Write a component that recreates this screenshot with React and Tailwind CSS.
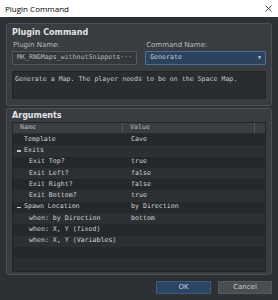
const ROWS = [
  { name: 'Template', value: 'Cave', indent: 1 },
  { name: 'Exits', value: '', indent: 0, toggle: true },
  { name: 'Exit Top?', value: 'true', indent: 2 },
  { name: 'Exit Left?', value: 'false', indent: 2 },
  { name: 'Exit Right?', value: 'false', indent: 2 },
  { name: 'Exit Bottom?', value: 'true', indent: 2 },
  { name: 'Spawn Location', value: 'by Direction', indent: 0, toggle: true },
  { name: 'when: by Direction', value: 'bottom', indent: 2 },
  { name: 'when: X, Y (fixed)', value: '', indent: 2 },
  { name: 'when: X, Y (Variables)', value: '', indent: 2 },
  { name: '', value: '', indent: 0 },
];

const mono = { fontFamily: '"DejaVu Sans Mono", monospace' };

export default function App() {
  return (
    <div className="w-[278px] h-[300px] bg-[#2d3135] flex flex-col text-[#cfd2d4] font-['DejaVu_Sans',sans-serif] overflow-hidden">
      <div className="h-[17px] bg-white flex items-center justify-between pl-[5px] pr-[6px] text-[8px] text-black font-['Open_Sans',sans-serif] shrink-0">
        <span>Plugin Command</span>
        <svg width="7" height="7" viewBox="0 0 7 7" stroke="#222" strokeWidth="0.8">
          <path d="M0.5 0.5L6.5 6.5M6.5 0.5L0.5 6.5" />
        </svg>
      </div>

      <div className="flex flex-col px-[6px] pt-[6px]">
        <div className="bg-[#393d41] border border-[#4d5155] rounded-[3px] px-[5px] pt-[3px] pb-[6px]">
          <div className="text-[8px] font-bold text-[#e2e4e6] leading-[12px]">Plugin Command</div>
          <div className="flex gap-[8px] mt-[1px]">
            <div className="flex-1 flex flex-col">
              <div className="text-[7px] leading-[11px] text-[#b9bcbf] pl-[1px]">Plugin Name:</div>
              <div className="h-[14px] bg-[#34383b] border border-[#55595c] rounded-[1px] flex items-center justify-between px-[4px] text-[6.6px] text-[#b8bbbd] whitespace-nowrap" style={mono}>
                <span>MK_RNGMaps_withoutSnippets</span>
                <span>···</span>
              </div>
            </div>
            <div className="flex-1 flex flex-col">
              <div className="text-[7px] leading-[11px] text-[#b9bcbf] pl-[1px]">Command Name:</div>
              <div className="h-[14px] bg-[#2c4360] border border-[#4f6f95] rounded-[1px] flex items-center justify-between px-[4px] text-[6.6px] text-[#c9ccd0]" style={mono}>
                <span>Generate</span>
                <span className="text-[5px]">▼</span>
              </div>
            </div>
          </div>
          <div className="mt-[6px] h-[28px] bg-[#2a2d30] border border-[#222527] rounded-[2px] px-[2px] pt-[3px] text-[6.6px] text-[#c5c8ca] whitespace-nowrap" style={mono}>
            Generate a Map. The player needs to be on the Space Map.
          </div>
        </div>

        <div className="mt-[2px] bg-[#393d41] border border-[#4d5155] rounded-[3px] px-[5px] pt-[1px] pb-[2px]">
          <div className="text-[8px] font-bold text-[#e2e4e6] leading-[12px]">Arguments</div>
          <div className="h-[150px] bg-[#2a2d30] border border-[#222527] flex flex-col overflow-hidden whitespace-nowrap" style={mono}>
            <div className="h-[11px] shrink-0 bg-[#3b3f43] flex text-[6.6px] text-[#b9bcbf] border-b border-[#2a2d30]">
              <div className="w-[110px] pl-[7px] border-r border-[#55595c] flex items-center">Name</div>
              <div className="flex-1 pl-[7px] border-r border-[#55595c] flex items-center">Value</div>
              <div className="w-[10px]" />
            </div>
            {ROWS.map((r, i) => (
              <div key={i} className={`h-[11.3px] shrink-0 flex items-center text-[6.6px] ${i % 2 === 0 ? 'bg-[#25282b]' : 'bg-[#2d3033]'}`}>
                <div className="w-[110px] flex items-center">
                  {r.toggle ? (
                    <span className="w-[11px] pl-[4px] flex items-center">
                      <span className="w-[4px] h-[1.5px] bg-[#c5c8ca]" />
                    </span>
                  ) : null}
                  <span className={r.toggle ? '' : r.indent === 2 ? 'pl-[16px]' : 'pl-[11px]'}>{r.name}</span>
                </div>
                <div className="flex-1 pl-[8px]">{r.value}</div>
              </div>
            ))}
          </div>
        </div>
      </div>

      <div className="flex justify-end gap-[7px] pr-[6px] mt-[6px]">
        <div className="w-[55px] h-[13px] bg-[#2b4566] border border-[#3f5a7c] flex items-center justify-center text-[7px] text-[#c8cdd3]">OK</div>
        <div className="w-[54px] h-[13px] bg-[#4a4e52] border border-[#55595c] flex items-center justify-center text-[7px] text-[#c8cacc]">Cancel</div>
      </div>
    </div>
  );
}
